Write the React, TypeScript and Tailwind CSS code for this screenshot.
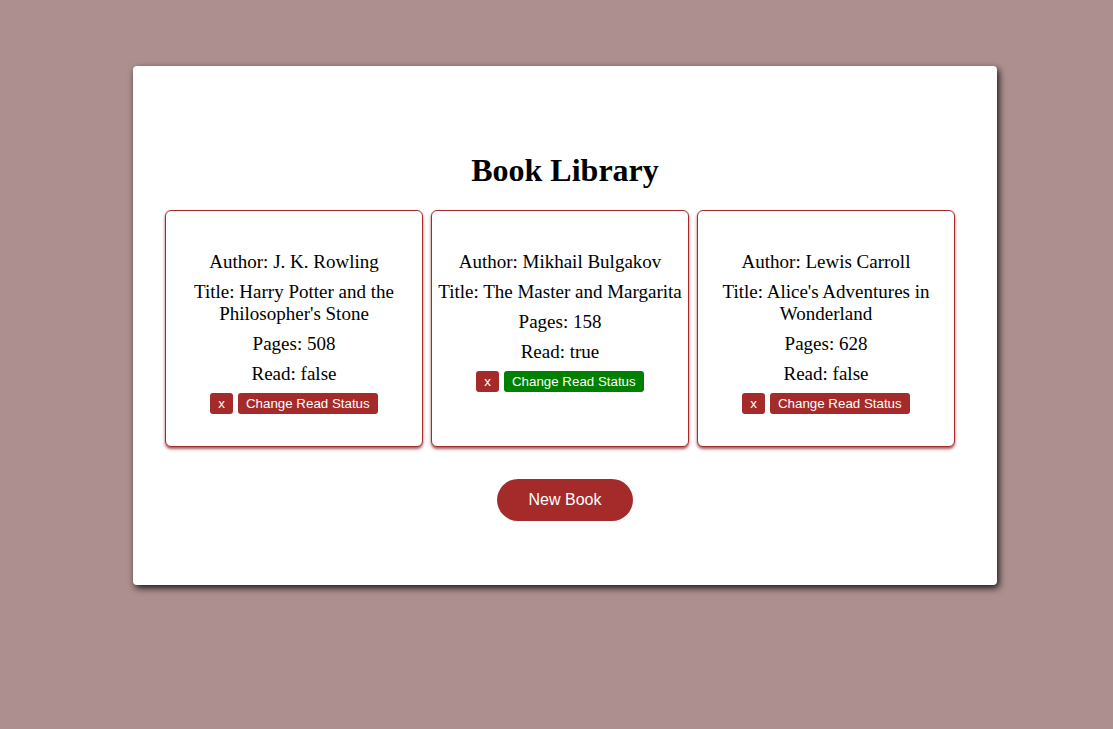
type Book = {
  author: string;
  title: string;
  pages: number;
  read: boolean;
};

const books: Book[] = [
  { author: "J. K. Rowling", title: "Harry Potter and the Philosopher's Stone", pages: 508, read: false },
  { author: "Mikhail Bulgakov", title: "The Master and Margarita", pages: 158, read: true },
  { author: "Lewis Carroll", title: "Alice's Adventures in Wonderland", pages: 628, read: false },
];

function BookCard({ book }: { book: Book }) {
  return (
    <div className="flex flex-col items-center gap-2 rounded-[6px] border border-[#a52a2a] bg-white px-[5px] pt-10 pb-8 text-center text-[19px] leading-[22px] text-black shadow-[0_2px_3px_rgba(140,30,30,0.75)]">
      <p>Author: {book.author}</p>
      <p>Title: {book.title}</p>
      <p>Pages: {book.pages}</p>
      <p>Read: {book.read ? "true" : "false"}</p>
      <div className="flex gap-[5px] font-['Liberation_Sans',Arial,sans-serif] text-[13.33px] leading-[15px] text-white">
        <button className="rounded-[3px] bg-[#a52a2a] px-[8px] py-[3px]">x</button>
        <button
          className={
            book.read
              ? "rounded-[3px] bg-[#008000] px-[8px] py-[3px]"
              : "rounded-[3px] bg-[#a52a2a] px-[8px] py-[3px]"
          }
        >
          Change Read Status
        </button>
      </div>
    </div>
  );
}

export default function App() {
  return (
    <div className="min-h-[729px] bg-[#ad8f8f] pt-[66px] font-['Liberation_Serif','Times_New_Roman',serif]">
      <div className="ml-[133px] flex w-[864px] flex-col items-center rounded-[4px] bg-white px-8 py-16 shadow-[2px_3px_7px_rgba(0,0,0,0.85)]">
        <h1 className="mt-[22px] mb-[21px] text-[32px] leading-[37px] font-bold text-black">
          Book Library
        </h1>
        <div className="grid w-full grid-cols-[repeat(3,258px)] gap-2">
          {books.map((book) => (
            <BookCard key={book.title} book={book} />
          ))}
        </div>
        <button className="mt-8 h-[42px] w-[136px] rounded-full bg-[#a52a2a] font-['Liberation_Sans',Arial,sans-serif] text-[16px] text-white">
          New Book
        </button>
      </div>
    </div>
  );
}
